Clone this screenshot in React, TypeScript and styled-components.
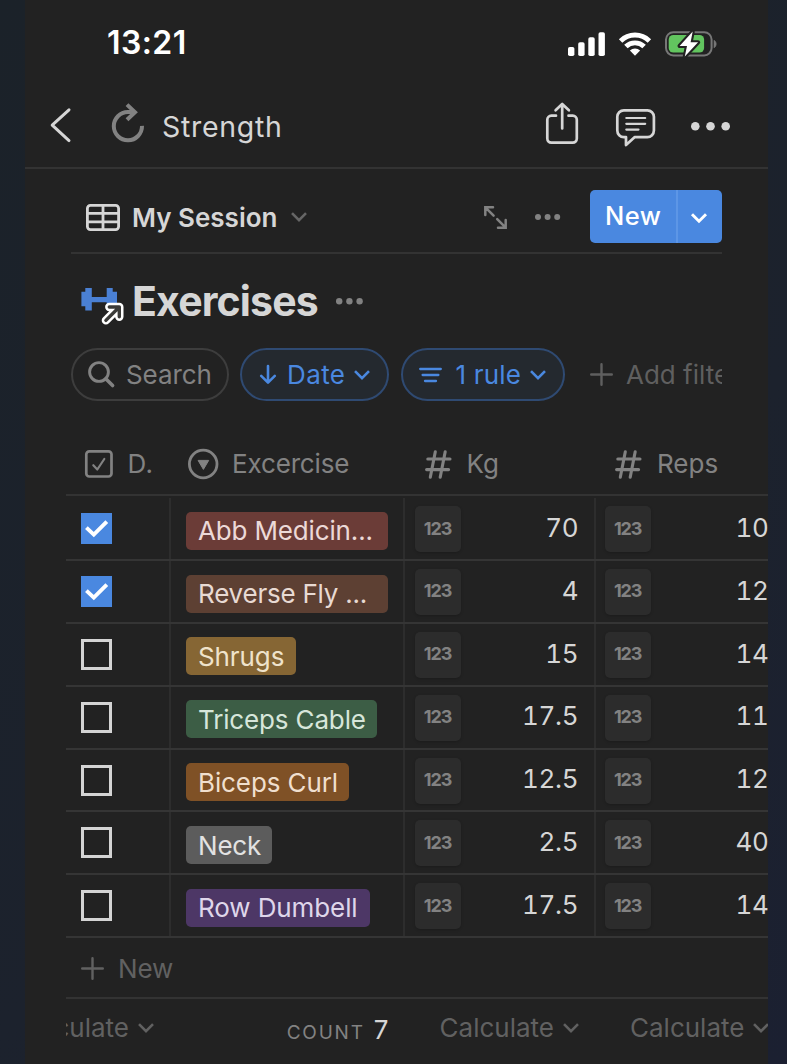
import React from "react";
import styled, { createGlobalStyle } from "styled-components";

const Global = createGlobalStyle`
  * { box-sizing: border-box; }
  body { margin: 0; background: #1b212b; }
  svg { display: block; flex: none; overflow: visible; }
`;

const Page = styled.div`
  width: 787px;
  height: 1064px;
  padding: 0 19px 0 25px;
  overflow: hidden;
  background: linear-gradient(140deg, #1b2229, #1c222d 60%, #1b2031);
  font-family: Inter, "Liberation Sans", sans-serif;
  color: #d6d6d6;
`;

const Phone = styled.div`
  display: flex;
  flex-direction: column;
  width: 743px;
  height: 1064px;
  overflow: hidden;
  background: #222222;
`;

const Label = styled.span<{
  $size?: number;
  $weight?: number;
  $spacing?: number;
  $width?: number;
  $color?: string;
  $clip?: boolean;
}>`
  flex: none;
  display: block;
  width: ${(p) => (p.$width ? `${p.$width}px` : "auto")};
  overflow: ${(p) => (p.$clip ? "hidden" : "visible")};
  white-space: nowrap;
  line-height: 1.2;
  font-size: ${(p) => p.$size ?? 26}px;
  font-weight: ${(p) => p.$weight ?? 400};
  letter-spacing: ${(p) => p.$spacing ?? 0}px;
  color: ${(p) => p.$color ?? "inherit"};
`;

const StatusBar = styled.div`
  display: flex;
  align-items: center;
  height: 87px;
  padding: 0 51px 0 82px;
`;

const StatusIcons = styled.div`
  display: flex;
  align-items: center;
  gap: 14px;
  margin-left: auto;
`;

const NavBar = styled.div`
  display: flex;
  align-items: center;
  height: 82px;
  padding: 0 38px 2px 24px;
  border-bottom: 2px solid #333333;
`;

const NavTitle = styled.div`
  padding-top: 2px;
`;

const NavActions = styled.div`
  display: flex;
  align-items: center;
  gap: 33.7px;
  margin-left: auto;
`;

const Spacer = styled.div<{ $width: number }>`
  flex: none;
  width: ${(p) => p.$width}px;
`;

const ViewBar = styled.div`
  display: flex;
  align-items: center;
  width: 651px;
  height: 85px;
  margin-left: 46px;
  padding: 13px 0 0 15px;
  border-bottom: 2px solid #333333;
`;

const ViewName = styled.div`
  padding-top: 2px;
`;

const NewButton = styled.div`
  display: flex;
  align-items: center;
  flex: none;
  width: 132px;
  height: 53px;
  margin: 0 0 2px auto;
  border-radius: 5px;
  background: #4a88e0;
  color: #ffffff;
`;

const NewMain = styled.div`
  width: 88px;
  height: 53px;
  padding: 11px 0 0 15px;
  border-right: 2px solid #5d96e6;
`;

const NewToggle = styled.div`
  display: flex;
  flex: 1;
  justify-content: center;
  padding: 3px 2px 0 0;
`;

const TitleRow = styled.div`
  display: flex;
  align-items: center;
  height: 94px;
  padding: 1px 0 0 56px;
`;

const TitleIcon = styled.div`
  padding-top: 9px;
`;

const Filters = styled.div`
  display: flex;
  align-items: center;
  gap: 11.5px;
  width: 651px;
  height: 53px;
  margin-left: 46px;
  overflow: hidden;
`;

const Chip = styled.div<{ $width: number; $active?: boolean; $pad: number }>`
  display: flex;
  align-items: center;
  flex: none;
  width: ${(p) => p.$width}px;
  height: 53px;
  padding-left: ${(p) => p.$pad}px;
  border: 2px solid ${(p) => (p.$active ? "#2f4a72" : "#3d3d3d")};
  border-radius: 27px;
  background: ${(p) => (p.$active ? "#24292f" : "transparent")};
  color: ${(p) => (p.$active ? "#4a88e0" : "#828282")};
`;

const AddFilter = styled.div`
  display: flex;
  align-items: center;
  gap: 13px;
  padding-left: 14px;
  color: #5f5f5f;
`;

const Table = styled.div`
  width: 702px;
  margin-left: 41px;
  overflow: hidden;
`;

const COLUMNS = "105px 234px 190.5px 172.5px";

const HeadRow = styled.div`
  display: grid;
  grid-template-columns: ${COLUMNS};
  height: 95px;
  margin-bottom: 2.2px;
  border-bottom: 2px solid #333333;
  color: #828282;
`;

const HeadCell = styled.div<{ $pad: number; $gap: number }>`
  display: flex;
  align-items: center;
  gap: ${(p) => p.$gap}px;
  padding: 33px 0 0 ${(p) => p.$pad}px;
`;

const Row = styled.div`
  display: grid;
  grid-template-columns: ${COLUMNS};
  height: 62.85px;
  border-bottom: 2px solid #353535;
`;

const Cell = styled.div<{ $top: number; $left: number; $last?: boolean }>`
  display: flex;
  align-items: flex-start;
  padding: ${(p) => p.$top}px 0 0 ${(p) => p.$left}px;
  border-right: ${(p) => (p.$last ? 0 : 2)}px solid #2d2d2d;
`;

const Checkbox = styled.div<{ $checked: boolean }>`
  display: flex;
  align-items: center;
  justify-content: center;
  width: 31px;
  height: 31px;
  border: ${(p) => (p.$checked ? "0" : "3px solid #d4d4d4")};
  background: ${(p) => (p.$checked ? "#4a88e0" : "transparent")};
`;

const Tag = styled.div<{ $bg: string; $fg: string; $width: number }>`
  width: ${(p) => p.$width}px;
  height: 38px;
  padding: 3.7px 0 0 12px;
  border-radius: 5px;
  background: ${(p) => p.$bg};
  color: ${(p) => p.$fg};
`;

const NumberKey = styled.div`
  display: flex;
  align-items: center;
  justify-content: center;
  flex: none;
  width: 46px;
  height: 46px;
  padding: 0 1px 1.5px 0;
  border-radius: 5px;
  background: #2c2c2c;
  box-shadow: 0 1px 3px rgba(0, 0, 0, 0.2);
`;

const Value = styled.div<{ $right: number }>`
  flex: 1;
  padding-top: 5.7px;
  margin-right: ${(p) => p.$right}px;
  text-align: right;
  white-space: nowrap;
  font-size: 26px;
  line-height: 31px;
  letter-spacing: -0.3px;
  font-variant-numeric: tabular-nums;
`;

const NewRow = styled.div`
  display: flex;
  align-items: center;
  gap: 14px;
  height: 61px;
  padding: 1.5px 0 0 15px;
  border-bottom: 2px solid #333333;
  color: #616161;
`;

const Footer = styled.div`
  display: grid;
  grid-template-columns: ${COLUMNS};
  height: 60px;
  color: #616161;
`;

const FooterCell = styled.div<{ $right: number }>`
  display: flex;
  align-items: center;
  justify-content: flex-end;
  gap: 9px;
  height: 57px;
  padding-right: ${(p) => p.$right}px;
  overflow: hidden;
`;

const LastFooterCell = styled(FooterCell)`
  justify-content: flex-start;
  padding-left: 34.5px;
`;

const Count = styled.div`
  display: flex;
  align-items: baseline;
  gap: 9px;
  padding-top: 3px;
`;

const Chevron = ({ stroke = 2.6 }: { stroke?: number }) => (
  <svg width="16" height="10" fill="none" stroke="currentColor" strokeWidth={stroke}>
    <path d="M1 1.2 8 8.2 15 1.2" />
  </svg>
);

const Plus = () => (
  <svg width="23" height="23" stroke="currentColor" strokeWidth="2.4" strokeLinecap="round">
    <path d="M11.5 1.2V21.8M1.2 11.5H21.8" />
  </svg>
);

const Dots = ({ r, step, color }: { r: number; step: number; color: string }) => (
  <svg width={step * 2 + r * 2} height={r * 2} fill={color}>
    {[0, 1, 2].map((i) => (
      <circle key={i} cx={r + i * step} cy={r} r={r} />
    ))}
  </svg>
);

const Signal = () => (
  <svg width="37" height="24" fill="#fff">
    <rect x="0" y="15" width="6.4" height="9" rx="1.8" />
    <rect x="10.2" y="10.3" width="6.4" height="13.7" rx="1.8" />
    <rect x="20.3" y="5.2" width="6.4" height="18.8" rx="1.8" />
    <rect x="30.5" y="0.2" width="6.4" height="23.8" rx="1.8" />
  </svg>
);

const Wifi = () => (
  <svg width="32" height="24" fill="none" stroke="#fff" strokeWidth="4.9">
    <path d="M1.6 8.9A20.6 20.6 0 0 1 30.4 8.9" />
    <path d="M6.9 14.6A13 13 0 0 1 25.1 14.6" />
    <path d="M16 23.8 10.9 18.6A7.4 7.4 0 0 1 21.1 18.6Z" fill="#fff" stroke="none" />
  </svg>
);

const Battery = () => (
  <svg width="52" height="26">
    <rect x="1" y="1.2" width="45.6" height="23.2" rx="7.4" fill="none" stroke="#777" strokeWidth="2" />
    <rect x="3.7" y="4" width="35.4" height="17.6" rx="4.6" fill="#62c55f" />
    <path d="M49 9.2A4.4 4.4 0 0 1 49 16.8Z" fill="#777" stroke="#777" strokeWidth=".6" />
    <path
      d="M27.7.6 14.6 15H22L19.8 25.6 33.1 11.3H25.6Z"
      fill="#fff"
      stroke="#222"
      strokeWidth="4.2"
      strokeLinejoin="round"
      paintOrder="stroke"
    />
  </svg>
);

const Back = () => (
  <svg width="24" height="38" fill="none" stroke="#d6d6d6" strokeWidth="3" strokeLinecap="round" strokeLinejoin="round">
    <path d="M20 2.8 3.2 18.2 20 33.6" />
  </svg>
);

const Refresh = () => (
  <svg width="36" height="45" fill="none" stroke="#828282" strokeWidth="4">
    <path d="M32 21.9A14.1 14.1 0 1 1 17.9 8.1H24.5" />
    <path d="M17 .6 25 8.2 17 15.8" />
  </svg>
);

const Share = () => (
  <svg width="36" height="48" fill="none" stroke="#d6d6d6" strokeWidth="2.7" strokeLinecap="round" strokeLinejoin="round">
    <path d="M12 13.7H7.3A4 4 0 0 0 3.3 17.7V36.6A4 4 0 0 0 7.3 40.6H28.8A4 4 0 0 0 32.8 36.6V17.7A4 4 0 0 0 28.8 13.7H24.5" />
    <path d="M18.2 26.4V2.4M11.6 8.3 18.2 2 24.9 8.3" />
  </svg>
);

const Comment = () => (
  <svg width="44" height="41" fill="none" stroke="#d6d6d6" strokeWidth="2.7" strokeLinecap="round" strokeLinejoin="round">
    <path d="M10.8 4.3H34.4A6.5 6.5 0 0 1 40.9 10.8V24.6A6.5 6.5 0 0 1 34.4 31.1H21.8L13 39V31.1H10.8A6.5 6.5 0 0 1 4.3 24.6V10.8A6.5 6.5 0 0 1 10.8 4.3Z" />
    <path d="M13.3 12H32.2M13.3 17.8H32.2M13.3 23.6H25.5" strokeWidth="2.2" />
  </svg>
);

const TableIcon = () => (
  <svg width="34" height="27" fill="none" stroke="#d6d6d6" strokeWidth="2.8">
    <rect x="1.4" y="1.4" width="31.2" height="24.2" rx="3" />
    <path d="M17 1.4V25.6M1.4 9.4H32.6M1.4 17.8H32.6" />
  </svg>
);

const Expand = () => (
  <svg width="23" height="23" fill="none" stroke="#828282" strokeWidth="2.5" strokeLinecap="round">
    <path d="M1.3 9V1.3H9M1.6 1.6 9.6 9.6M21.7 14V21.7H14M21.4 21.4 13.2 13.2" />
  </svg>
);

const Dumbbell = () => (
  <svg width="42" height="37">
    <path
      d="M.4 3.7H4.3V0H10.8V9H25.7V0H31.7V3.7H36V18H31.7V22H25.7V14.3H10.8V22.4H4.3V18.3H.4Z"
      fill="#4a80d4"
    />
    <g fill="none" strokeLinecap="round" strokeLinejoin="round">
      <path d="M28.3 19H38.3V28.7M38.3 19 24.9 32.4" stroke="#fff" strokeWidth="8.4" />
      <path d="M28.3 19H38.3V28.7M38.3 19 24.9 32.4" stroke="#3a3a38" strokeWidth="3.4" />
    </g>
  </svg>
);

const SearchIcon = () => (
  <svg width="27" height="27" fill="none" stroke="currentColor" strokeWidth="2.9" strokeLinecap="round">
    <circle cx="11" cy="11" r="9.4" />
    <path d="M17.8 17.8 24.6 24.6" strokeWidth="3.6" />
  </svg>
);

const ArrowDown = () => (
  <svg width="16" height="19" fill="none" stroke="currentColor" strokeWidth="2.6" strokeLinecap="round" strokeLinejoin="round">
    <path d="M8 1V17.6M1.2 10.8 8 17.6 14.8 10.8" />
  </svg>
);

const FilterLines = () => (
  <svg width="23" height="16" stroke="currentColor" strokeWidth="2.3" strokeLinecap="round">
    <path d="M1.2 2H21.8M3.6 8H19.4M6 14H17" />
  </svg>
);

const CheckProp = () => (
  <svg width="28" height="28" fill="none" stroke="currentColor" strokeWidth="2.7" strokeLinejoin="round" strokeLinecap="round">
    <rect x="1.3" y="1.3" width="25.2" height="25.2" rx="3" />
    <path d="M8.3 15.2 12.3 19.5 19.3 9" strokeWidth="2.2" />
  </svg>
);

const SelectProp = () => (
  <svg width="30" height="30" fill="none" stroke="currentColor" strokeWidth="2.8">
    <circle cx="15.2" cy="15" r="13.8" />
    <path d="M10.1 11.4H20.7L15.4 20.4Z" fill="currentColor" strokeWidth="1" strokeLinejoin="round" />
  </svg>
);

const HashProp = () => (
  <svg width="27" height="29" fill="none" stroke="currentColor" strokeWidth="3.1" strokeLinecap="round">
    <path d="M10.3 1.7 5.3 27.2M20.2 1.7 15.2 27.2M2.8 9H25M1.6 19.6H23.6" />
  </svg>
);

const Check = () => (
  <svg width="23" height="17" fill="none" stroke="#fff" strokeWidth="3.9">
    <path d="M1.4 7.6 8.8 14.6 21.8 1.6" />
  </svg>
);

const rows = [
  { done: true, name: "Abb Medicin...", bg: "#6b3c37", fg: "#ecd9d7", width: 202, spacing: -0.15, kg: "70", reps: "10" },
  { done: true, name: "Reverse Fly ...", bg: "#5d4033", fg: "#e8dad3", width: 202, spacing: -0.22, kg: "4", reps: "12" },
  { done: false, name: "Shrugs", bg: "#866634", fg: "#efe3cb", width: 110, spacing: -0.1, kg: "15", reps: "14" },
  { done: false, name: "Triceps Cable", bg: "#3c5d45", fg: "#d7e6da", width: 191.4, spacing: -0.15, kg: "17.5", reps: "11" },
  { done: false, name: "Biceps Curl", bg: "#7f5126", fg: "#f0dfce", width: 163.4, spacing: -0.1, kg: "12.5", reps: "12" },
  { done: false, name: "Neck", bg: "#5c5c5c", fg: "#e2e2e2", width: 86.4, spacing: -0.2, kg: "2.5", reps: "40" },
  { done: false, name: "Row Dumbell", bg: "#4d3766", fg: "#dfd6ea", width: 184, spacing: -0.1, kg: "17.5", reps: "14" },
];

const NumberCell = ({ value, last }: { value: string; last?: boolean }) => (
  <Cell $top={8} $left={last ? 9.6 : 10} $last={last}>
    <NumberKey>
      <Label $size={18} $weight={700} $spacing={-1.1} $color="#828282">123</Label>
    </NumberKey>
    <Value $right={last ? -0.5 : 15.2}>{value}</Value>
  </Cell>
);

export default function App() {
  return (
    <Page>
      <Global />
      <Phone>
        <StatusBar>
          <Label $size={32} $weight={600} $spacing={0.4} $color="#fff">13:21</Label>
          <StatusIcons>
            <Signal />
            <Wifi />
            <Battery />
          </StatusIcons>
        </StatusBar>

        <NavBar>
          <Back />
          <Spacer $width={37} />
          <Refresh />
          <Spacer $width={16} />
          <NavTitle><Label $size={28.5} $spacing={0.7}>Strength</Label></NavTitle>
          <NavActions>
            <Share />
            <Comment />
            <Dots r={4.3} step={15.2} color="#d6d6d6" />
          </NavActions>
        </NavBar>

        <ViewBar>
          <TableIcon />
          <Spacer $width={12} />
          <ViewName><Label $weight={600} $width={159}>My Session</Label></ViewName>
          <Label $color="#666"><Chevron /></Label>
          <Spacer $width={177} />
          <Expand />
          <Spacer $width={28} />
          <Dots r={3} step={9.6} color="#828282" />
          <NewButton>
            <NewMain><Label $size={25.5} $weight={500} $spacing={0.4}>New</Label></NewMain>
            <NewToggle><Chevron stroke={2.9} /></NewToggle>
          </NewButton>
        </ViewBar>

        <TitleRow>
          <TitleIcon><Dumbbell /></TitleIcon>
          <Spacer $width={9} />
          <Label $size={41} $weight={700} $width={204} $spacing={-0.85}>Exercises</Label>
          <Dots r={3.2} step={10.2} color="#828282" />
        </TitleRow>

        <Filters>
          <Chip $width={157.5} $pad={14.5}>
            <SearchIcon />
            <Spacer $width={11.5} />
            <Label $spacing={-0.1}>Search</Label>
          </Chip>
          <Chip $width={149} $pad={18} $active>
            <ArrowDown />
            <Spacer $width={11} />
            <Label $width={66.5} $spacing={0.4}>Date</Label>
            <Chevron />
          </Chip>
          <Chip $width={164} $pad={16} $active>
            <FilterLines />
            <Spacer $width={14} />
            <Label $width={74.5} $spacing={0.2}>1 rule</Label>
            <Chevron />
          </Chip>
          <AddFilter>
            <Plus />
            <Label>Add filter</Label>
          </AddFilter>
        </Filters>

        <Table>
          <HeadRow>
            <HeadCell $pad={18.5} $gap={15}>
              <CheckProp />
              <Label $width={27.5} $spacing={0.3} $clip>D...</Label>
            </HeadCell>
            <HeadCell $pad={17} $gap={14}>
              <SelectProp />
              <Label $spacing={-0.15}>Excercise</Label>
            </HeadCell>
            <HeadCell $pad={20} $gap={14.5}>
              <HashProp />
              <Label>Kg</Label>
            </HeadCell>
            <HeadCell $pad={19.5} $gap={15}>
              <HashProp />
              <Label>Reps</Label>
            </HeadCell>
          </HeadRow>

          {rows.map((r) => (
            <Row key={r.name}>
              <Cell $top={15} $left={15}>
                <Checkbox $checked={r.done}>{r.done && <Check />}</Checkbox>
              </Cell>
              <Cell $top={13.5} $left={15}>
                <Tag $bg={r.bg} $fg={r.fg} $width={r.width}>
                  <Label $spacing={r.spacing}>{r.name}</Label>
                </Tag>
              </Cell>
              <NumberCell value={r.kg} />
              <NumberCell value={r.reps} last />
            </Row>
          ))}

          <NewRow>
            <Plus />
            <Label $spacing={-0.1}>New</Label>
          </NewRow>

          <Footer>
            <FooterCell $right={17}>
              <Label>Calculate</Label>
              <Chevron />
            </FooterCell>
            <FooterCell $right={16.5}>
              <Count>
                <Label $size={19} $spacing={1.8} $color="#828282">COUNT</Label>
                <Label $color="#d6d6d6">7</Label>
              </Count>
            </FooterCell>
            <FooterCell $right={16.5}>
              <Label>Calculate</Label>
              <Chevron />
            </FooterCell>
            <LastFooterCell $right={0}>
              <Label>Calculate</Label>
              <Chevron />
            </LastFooterCell>
          </Footer>
        </Table>
      </Phone>
    </Page>
  );
}
